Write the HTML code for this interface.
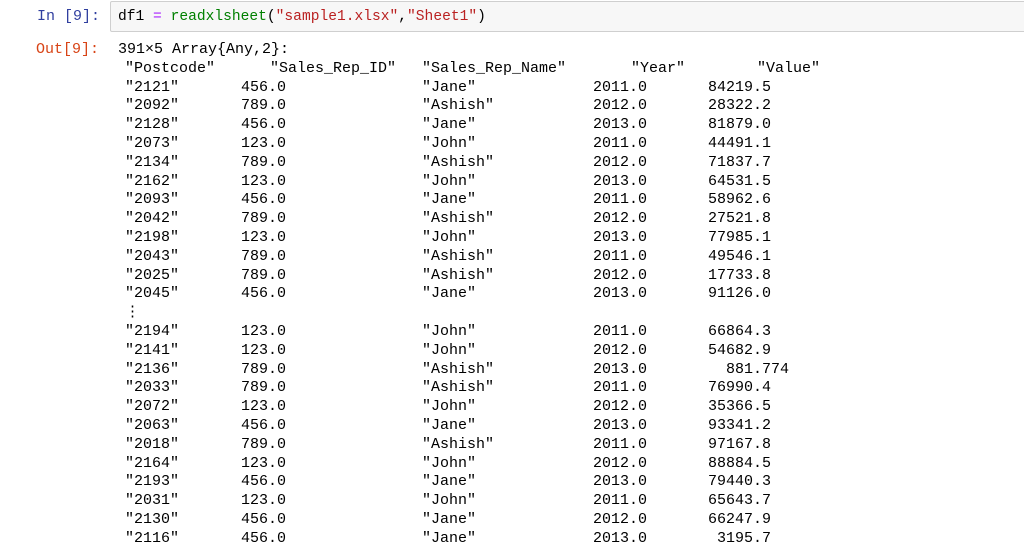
<!DOCTYPE html>
<html><head><meta charset="utf-8"><style>
body{margin:0;width:1024px;height:560px;background:#fff;overflow:hidden;position:relative;font-family:"Liberation Mono",monospace;}
.p{position:absolute;font-size:15px;}
.box{position:absolute;left:110px;top:1px;width:920px;height:31px;background:#f7f7f7;border:1px solid #cfcfcf;border-radius:2px;box-sizing:border-box;}
.r{position:absolute;left:0;height:19px;line-height:19px;font-size:15px;color:#000;white-space:pre;width:1024px;}
.r span{position:absolute;}
</style></head><body>
<div class="box"></div>
<div class="p" style="left:37px;top:7px;color:#303F9F;line-height:20px;">In [9]:</div>
<div class="p" style="left:118px;top:7px;line-height:20px;font-size:14.6px;white-space:pre;">df1 <span style="color:#AA22FF">=</span> <span style="color:#008000">readxlsheet</span>(<span style="color:#BA2121">"sample1.xlsx"</span>,<span style="color:#BA2121">"Sheet1"</span>)</div>
<div class="p" style="left:36px;top:40px;color:#D84315;line-height:20px;">Out[9]:</div>
<div id="o"></div>
<script>
var rows=[
["391×5 Array{Any,2}:"],
["\"Postcode\"","\"Sales_Rep_ID\"","\"Sales_Rep_Name\"","\"Year\"","\"Value\"",1],
["\"2121\"","456.0","\"Jane\"","2011.0","84219.5"],
["\"2092\"","789.0","\"Ashish\"","2012.0","28322.2"],
["\"2128\"","456.0","\"Jane\"","2013.0","81879.0"],
["\"2073\"","123.0","\"John\"","2011.0","44491.1"],
["\"2134\"","789.0","\"Ashish\"","2012.0","71837.7"],
["\"2162\"","123.0","\"John\"","2013.0","64531.5"],
["\"2093\"","456.0","\"Jane\"","2011.0","58962.6"],
["\"2042\"","789.0","\"Ashish\"","2012.0","27521.8"],
["\"2198\"","123.0","\"John\"","2013.0","77985.1"],
["\"2043\"","789.0","\"Ashish\"","2011.0","49546.1"],
["\"2025\"","789.0","\"Ashish\"","2012.0","17733.8"],
["\"2045\"","456.0","\"Jane\"","2013.0","91126.0"],
["⋮"],
["\"2194\"","123.0","\"John\"","2011.0","66864.3"],
["\"2141\"","123.0","\"John\"","2012.0","54682.9"],
["\"2136\"","789.0","\"Ashish\"","2013.0","  881.774"],
["\"2033\"","789.0","\"Ashish\"","2011.0","76990.4"],
["\"2072\"","123.0","\"John\"","2012.0","35366.5"],
["\"2063\"","456.0","\"Jane\"","2013.0","93341.2"],
["\"2018\"","789.0","\"Ashish\"","2011.0","97167.8"],
["\"2164\"","123.0","\"John\"","2012.0","88884.5"],
["\"2193\"","456.0","\"Jane\"","2013.0","79440.3"],
["\"2031\"","123.0","\"John\"","2011.0","65643.7"],
["\"2130\"","456.0","\"Jane\"","2012.0","66247.9"],
["\"2116\"","456.0","\"Jane\"","2013.0"," 3195.7"]];
var h="";
rows.forEach(function(r,i){
 var top=40+i*18.8;
 h+='<div class="r" style="top:'+top+'px">';
 if(r.length==1){h+='<span style="left:'+(i==0?118:125)+'px">'+r[0]+'</span>';}
 else{var xs=r[5]?[125,270,422,631,757]:[125,241,422,593,708];
  for(var k=0;k<5;k++)h+='<span style="left:'+xs[k]+'px">'+r[k]+'</span>';}
 h+='</div>';
});
document.getElementById("o").innerHTML=h;
</script>
</body></html>
